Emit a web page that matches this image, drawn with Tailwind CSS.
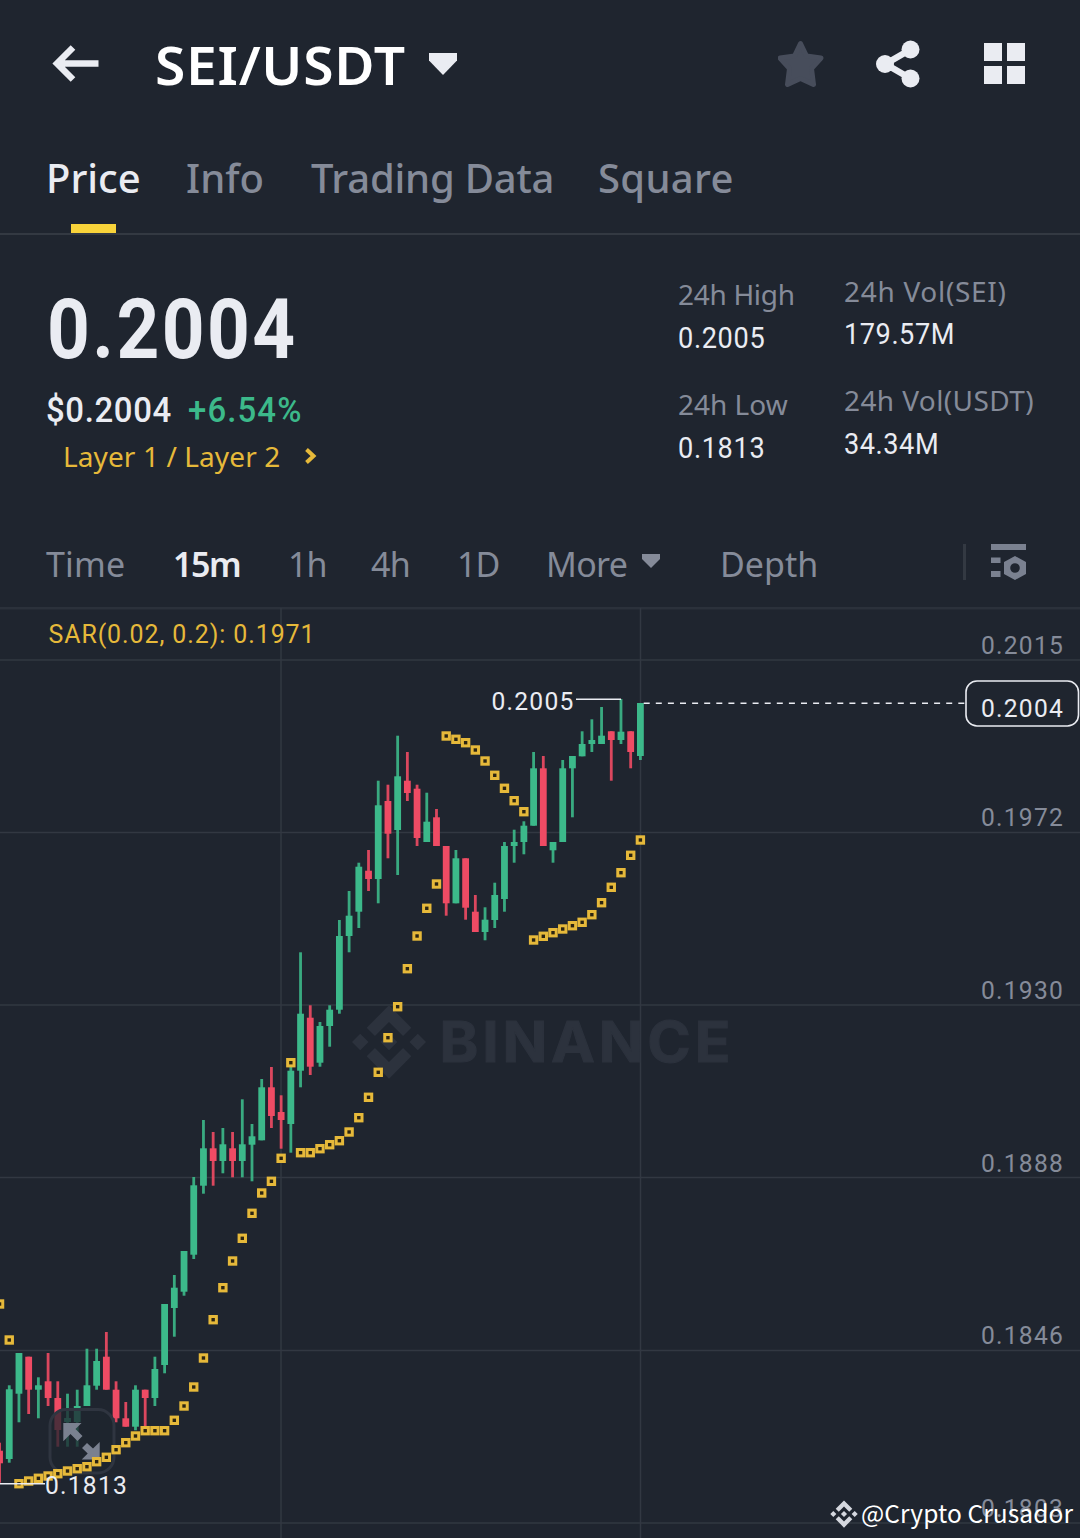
<!DOCTYPE html>
<html lang="en">
<head>
  <meta charset="UTF-8" />
  <meta name="viewport" content="width=device-width, initial-scale=1.0" />
  <title>SEI/USDT</title>
  <script src="https://cdn.jsdelivr.net/npm/@tailwindcss/browser@4"></script>
</head>
<body class="w-[1080px] h-[1538px] overflow-hidden bg-[#1f252f] text-[#eaecf2] font-['Noto_Sans',sans-serif]">

  <header class="flex items-center h-32 pb-px pl-[52px] pr-[55px]">
    <svg class="w-[47px] h-[37px]" viewBox="0 0 47 37" fill="none" stroke="#eaecf2" stroke-width="6.5">
      <path d="M46.5 18.5H5M21 2.5L5 18.5l16 16" />
    </svg>
    <h1 class="ml-[56px] mt-0.5 w-[274px] text-[53px] leading-none font-semibold text-white origin-left scale-x-[1.04] tracking-[0.7px] whitespace-nowrap">SEI/USDT</h1>
    <svg class="w-7 h-[22px]" viewBox="0 0 28 22" fill="#eaecf2"><path d="M0 0h28v7.5L14 22 0 7.5z" /></svg>
    <div class="ml-auto flex items-center">
      <svg class="w-[46px] h-[48px]" viewBox="0 0 46 48" fill="#474d5b" stroke="#474d5b" stroke-width="5" stroke-linejoin="round">
        <path d="M22.5 3.5l6 12.5 14.5 2-9.5 10.5 2 16-13-6-13 6 2-16L2 18l14.5-2z" />
      </svg>
      <svg class="ml-[51px] w-[45px] h-[48px]" viewBox="0 0 45 48" fill="#eaecf2">
        <path d="M35.5 9.5L10.5 24l25 14.5" fill="none" stroke="#eaecf2" stroke-width="6.5" />
        <circle cx="35.5" cy="9.5" r="9" /><circle cx="10" cy="24" r="9" /><circle cx="35.5" cy="38.5" r="9" />
      </svg>
      <div class="ml-[64px] grid grid-cols-2 gap-[5px]">
        <i class="size-[18px] bg-[#eaecf2]"></i><i class="size-[18px] bg-[#eaecf2]"></i>
        <i class="size-[18px] bg-[#eaecf2]"></i><i class="size-[18px] bg-[#eaecf2]"></i>
      </div>
    </div>
  </header>

  <nav class="flex h-[107px] pl-[46px] pt-1 border-b-2 border-[#333942] text-[40px] leading-[92px] font-medium text-[#858b99] whitespace-nowrap">
    <div class="w-[140px] text-[#eaecf2]">
      <span class="block">Price</span>
      <i class="block ml-[25px] w-[45px] h-[9px] bg-[#f8d33a]"></i>
    </div>
    <span class="w-[125px]">Info</span>
    <span class="w-[287px] tracking-[-0.2px]">Trading Data</span>
    <span class="tracking-[0.3px]">Square</span>
  </nav>

  <section class="flex h-[285px] pl-[46px] whitespace-nowrap">
    <div class="w-[632px] pt-[53px] font-['Roboto',sans-serif]">
      <p class="ml-px text-[84px] leading-[84px] font-bold origin-left scale-x-[0.89] tracking-[2.7px]">0.2004</p>
      <p class="mt-[19px] flex text-[35px] leading-10 font-medium">
        <span class="w-[142px] origin-left scale-x-[0.94] tracking-[0.7px]">$0.2004</span>
        <span class="origin-left scale-x-[0.94] tracking-[1.2px] text-[#3cb98a]">+6.54%</span>
      </p>
      <p class="mt-[7px] ml-[17px] flex items-center text-[28px] leading-9 text-[#e6b93a] font-['Noto_Sans',sans-serif]">
        <span class="w-[242px] tracking-[0.1px]">Layer 1 / Layer 2</span>
        <svg class="w-3 h-4" viewBox="0 0 12 16" fill="none" stroke="#e6b93a" stroke-width="4"><path d="M1.5 1.5L8.5 8l-7 6.5" /></svg>
      </p>
    </div>
    <div class="w-[166px] pt-[39px] leading-10">
      <p class="text-[28px] tracking-[-0.3px] text-[#858b99]">24h High</p>
      <p class="mt-1 text-[29.5px] origin-left scale-x-[0.92] tracking-[0.7px] font-['Roboto',sans-serif]">0.2005</p>
      <p class="mt-[26px] text-[28px] text-[#858b99]">24h Low</p>
      <p class="mt-1 text-[29.5px] origin-left scale-x-[0.92] tracking-[0.7px] font-['Roboto',sans-serif]">0.1813</p>
    </div>
    <div class="pt-9 leading-10">
      <p class="text-[28px] tracking-[0.7px] text-[#858b99]">24h Vol(SEI)</p>
      <p class="mt-[3px] text-[29.5px] origin-left scale-x-[0.92] tracking-[0.6px] font-['Roboto',sans-serif]">179.57M</p>
      <p class="mt-[26px] text-[28px] tracking-[0.4px] text-[#858b99]">24h Vol(USDT)</p>
      <p class="mt-1 text-[29.5px] origin-left scale-x-[0.92] tracking-[0.6px] font-['Roboto',sans-serif]">34.34M</p>
    </div>
  </section>

  <div class="flex items-center h-[87px] pt-0.5 pl-[46px] pr-[54px] text-[34px] text-[#858b99] whitespace-nowrap">
    <span class="w-[127px] tracking-[0.2px]">Time</span>
    <span class="w-[115px] font-semibold text-[#eaecf2] tracking-[-1.5px]">15m</span>
    <span class="w-[83px] tracking-[-1px]">1h</span>
    <span class="w-[86px] tracking-[-0.8px]">4h</span>
    <span class="w-[89px] tracking-[-1px]">1D</span>
    <span class="w-[96px] tracking-[-0.7px]">More</span>
    <svg class="w-[18px] h-[14px] mb-2" viewBox="0 0 18 14" fill="#858b99"><path d="M0 0h18v5L9 14 0 5z" /></svg>
    <span class="ml-[60px]">Depth</span>
    <i class="ml-auto mb-1.5 w-[3px] h-9 bg-[#333942]"></i>
    <svg class="ml-[25px] mb-1.5 w-[35px] h-9" viewBox="0 0 35 36" fill="#7a8190">
      <path d="M0 0h35v6H0zM0 13.5h9.5v5.5H0zM0 27h9.5v6H0z" />
      <path fill-rule="evenodd" d="M24 12l11 6v12l-11 6-11-6V18zM24 19.2a4.8 4.8 0 1 0 0 9.6a4.8 4.8 0 1 0 0-9.6z" />
    </svg>
  </div>

  <svg class="block w-[1080px] h-[931px] font-['Roboto',sans-serif] text-[26.5px]" viewBox="0 607 1080 931">
    <g stroke="#323842" stroke-width="1.5" fill="none">
      <path d="M0 608h1080" stroke="#2b313b" stroke-width="3" />
      <path d="M0 660h1080M0 832.5h1080M0 1005h1080M0 1177.5h1080M0 1350.5h1080M0 1523h1080M281 608v930M640.5 608v930" />
    </g>

    <!-- watermark -->
    <g fill="#2c323d">
      <g transform="translate(389 1042) scale(0.587)">
        <path id="mark" d="M-24 -10.2L0 -34.2l24 24 14-14L0 -62.5l-38 38.3zM-63 0l14-14 14 14-14 14zM-24 10.2L0 34.2l24-24 14 14L0 62.5l-38-38.3zM35 0l14-14 14 14-14 14zM-14 0L0-14 14 0 0 14z" />
      </g>
      <text transform="translate(439.5 1062) scale(1.05 1)" textLength="277" class="font-['Inter',sans-serif] text-[56px] font-bold" stroke="#2c323d">BINANCE</text>
    </g>

    <g id="candles"></g>

    <!-- expand button -->
    <rect x="50" y="1409.5" width="64" height="63.5" rx="16" fill="#1f252f" fill-opacity="0.75" stroke="#2f3540" stroke-width="3" />
    <path fill="#7a8190" d="M63.3 1423h18.2l-6 6 7 7-5 5-7-7-7.2 7.2zM99.7 1459.5h-18l6-6-5.7-5.5 5-5 6 5.5 6.7-6.5z" />

    <g id="dots" fill="#2b2412" stroke="#e6b93a" stroke-width="3"></g>

    <g id="axis" fill="#858b99"></g>
    <text transform="translate(48.5 643) scale(0.94 1)" textLength="283" fill="#e6b93a">SAR(0.02, 0.2): 0.1971</text>

    <g stroke="#eaecf2" stroke-width="1.6" fill="none">
      <path d="M576 699.3h45M0 1483.7h45" />
      <path d="M643.7 703.3H965" stroke-dasharray="6 6.1" />
      <rect x="966" y="681" width="112.5" height="45" rx="11" fill="#1f252f" />
    </g>
    <g fill="#eaecf2">
      <text transform="translate(491.5 710) scale(0.93 1)" textLength="88">0.2005</text>
      <text transform="translate(981 717) scale(0.93 1)" textLength="88">0.2004</text>
      <text transform="translate(45 1494) scale(0.93 1)" textLength="88">0.1813</text>
    </g>

    <use href="#mark" transform="translate(844 1514) scale(0.218)" fill="#d5d8df" />
    <text x="861" y="1523" textLength="212" fill="#fff" class="font-['Noto_Sans_CJK_SC',sans-serif] text-[24.5px]">@Crypto Crusador</text>
  </svg>

  <script>
    // [up, high, body top, body bottom, low, sar] as y positions
    const candles = [
      [0, 1442.7, 1450.7, 1463.3, 1482.7, 1304], [1, 1385.3, 1389.3, 1459, 1462.7, 1340],
      [1, 1353, 1353, 1393.7, 1422.3, 1483.7], [0, 1356.7, 1356.7, 1389.7, 1414, 1481],
      [1, 1377.3, 1385.3, 1389.7, 1418.3, 1478.3], [0, 1353, 1381.3, 1398, 1406, 1476],
      [0, 1381.3, 1398, 1430, 1446.7, 1473.7], [1, 1393.7, 1418, 1422, 1446.7, 1471],
      [1, 1389.7, 1406, 1422, 1446.7, 1468.7], [1, 1348.7, 1385.3, 1406, 1406, 1466.7],
      [1, 1348.7, 1361, 1385.7, 1389.7, 1461.7], [0, 1332, 1356.7, 1389.7, 1389.7, 1457.3],
      [0, 1381.3, 1389.7, 1418.3, 1422.3, 1449.7], [0, 1402, 1418.3, 1426.7, 1426.7, 1442.7],
      [1, 1385.3, 1389.7, 1426.7, 1430.3, 1436], [0, 1389.7, 1389.7, 1398, 1426.7, 1430.7],
      [1, 1356.7, 1369, 1398, 1406, 1430.7], [1, 1304, 1304, 1365, 1373.3, 1430.7],
      [1, 1275, 1287.7, 1308, 1336.7, 1420.3], [1, 1251, 1251, 1291.7, 1295.7, 1406],
      [1, 1177, 1185.3, 1254.7, 1259, 1387], [1, 1120, 1148.3, 1185.7, 1193.7, 1358],
      [0, 1132, 1148.3, 1161, 1185.7, 1319.7], [1, 1128, 1144.3, 1161, 1173.3, 1287.7],
      [0, 1132, 1148.3, 1161, 1177.3, 1261], [1, 1099.3, 1144.3, 1161, 1177.3, 1238.3],
      [1, 1124, 1136.3, 1144.7, 1181.3, 1213.3], [1, 1079, 1087.3, 1140.3, 1140.3, 1193],
      [0, 1067, 1087.3, 1116, 1128, 1181.3], [0, 1095.3, 1112, 1120, 1148.7, 1158.3],
      [1, 1060, 1070.7, 1124, 1152.7, 1062.7], [1, 952.3, 1013.7, 1070.7, 1087.3, 1152.7],
      [0, 1005.3, 1017.7, 1066.7, 1075, 1152.7], [1, 1022, 1026, 1062.7, 1066.7, 1148.7],
      [1, 1005.3, 1009.7, 1026, 1046.7, 1144.7], [1, 920, 936, 1009.7, 1013.7, 1140.7],
      [1, 891, 915.7, 936, 952.3, 1132], [1, 862.7, 866.7, 911.7, 928, 1117.7],
      [0, 850, 870.7, 879, 891, 1097.3], [1, 780.7, 805.3, 879, 903.3, 1072.3],
      [0, 784.7, 801, 833.7, 858.3, 1037.7], [1, 735.7, 776.3, 830, 875, 1006.7],
      [0, 752, 780.7, 793, 801, 968.7], [0, 784.7, 788.7, 838, 846, 936],
      [1, 792.7, 821.7, 842, 842, 908.3], [0, 809, 817.3, 846, 846, 884],
      [0, 846, 846, 903.3, 915.7, 736], [1, 850, 858.3, 903.3, 903.3, 739.3],
      [0, 858.3, 858.3, 907.7, 919.7, 742.7], [0, 895, 911.7, 932, 932, 750],
      [1, 907.3, 919.7, 932, 940.3, 761], [1, 882.7, 895, 920, 928, 775.3],
      [1, 842, 846, 899, 911.7, 788.3], [1, 829.7, 842, 846, 862.7, 800.7],
      [1, 821.3, 825.7, 842, 854.3, 811.7], [1, 752, 768.3, 825.7, 825.7, 940],
      [0, 756, 768.3, 846, 846, 936.3], [1, 842, 842, 850.3, 862.7, 932.7],
      [1, 760, 768.3, 842, 842, 929], [1, 756, 756, 768.3, 817.3, 925.7],
      [1, 731.3, 744, 756.3, 756.3, 922.3], [1, 719.3, 740, 744, 752, 914.7],
      [1, 707, 735.7, 744, 744, 902.7], [0, 731.3, 731.3, 740, 780.7, 887.3],
      [1, 699, 731.7, 740, 744, 872.7], [0, 731.3, 731.3, 752, 768.3, 855.3],
      [1, 703, 703, 756, 760, 840],
    ];

    let bars = "";
    let dots = "";
    candles.forEach(([up, high, top, bottom, low, sar], i) => {
      const x = 640.4 - 9.71 * (candles.length - 1 - i);
      bars += `<g fill="${up ? "#3cb98a" : "#ef4b64"}">
        <rect x="${x - 1.4}" y="${high}" width="2.8" height="${low - high}" fill-opacity="0.9" />
        <rect x="${x - 3.4}" y="${top}" width="6.8" height="${bottom - top}" />
      </g>`;
      dots += `<rect x="${x - 3.2}" y="${sar - 3.2}" width="6.4" height="6.4" />`;
    });
    document.getElementById("candles").innerHTML = bars;
    document.getElementById("dots").innerHTML = dots;

    const levels = [["0.2015", 654], ["0.1972", 826], ["0.1930", 999], ["0.1888", 1172], ["0.1846", 1344], ["0.1803", 1517]];
    document.getElementById("axis").innerHTML = levels
      .map(([label, y]) => `<text transform="translate(981 ${y}) scale(0.93 1)" textLength="88">${label}</text>`)
      .join("");
  </script>

</body>
</html>
